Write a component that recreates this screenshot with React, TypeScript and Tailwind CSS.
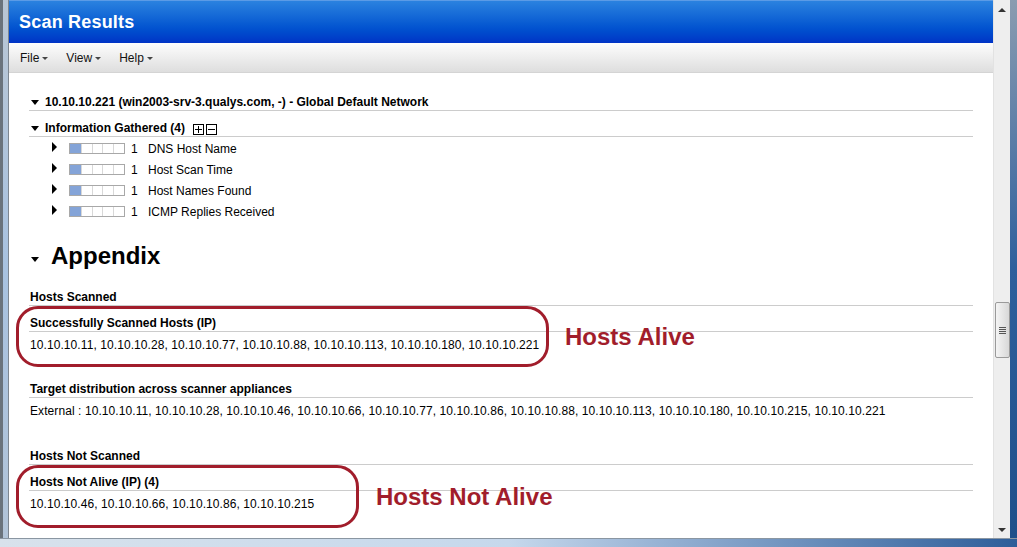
import React from 'react';

const font = { fontFamily: '"Liberation Sans", Arial, sans-serif' };

const infoRows = ['DNS Host Name', 'Host Scan Time', 'Host Names Found', 'ICMP Replies Received'];

const aliveHosts = '10.10.10.11, 10.10.10.28, 10.10.10.77, 10.10.10.88, 10.10.10.113, 10.10.10.180, 10.10.10.221';
const targetHosts =
  'External : 10.10.10.11, 10.10.10.28, 10.10.10.46, 10.10.10.66, 10.10.10.77, 10.10.10.86, 10.10.10.88, 10.10.10.113, 10.10.10.180, 10.10.10.215, 10.10.10.221';
const deadHosts = '10.10.10.46, 10.10.10.66, 10.10.10.86, 10.10.10.215';

const DownTri = ({ className = '' }: { className?: string }) => (
  <span className={`inline-block w-0 h-0 border-l-[4px] border-r-[4px] border-t-[5px] border-l-transparent border-r-transparent border-t-black ${className}`} />
);

const MenuItem = ({ label }: { label: string }) => (
  <div className="flex items-center gap-[3px] text-[12px] text-[#111]">
    {label}
    <span className="inline-block w-0 h-0 border-l-[3px] border-r-[3px] border-t-[3px] border-l-transparent border-r-transparent border-t-[#444]" />
  </div>
);

const SubHeading = ({ children, className = '' }: { children: React.ReactNode; className?: string }) => (
  <div className={`h-[17px] border-b border-[#cccccc] text-[12px] leading-[16px] font-bold text-black pl-[1px] ${className}`}>{children}</div>
);

const IpLine = ({ children }: { children: React.ReactNode }) => (
  <div className="mt-[5px] h-[16px] leading-[16px] pl-[1px] tracking-[0.08px] whitespace-nowrap">{children}</div>
);

const ScoreBar = () => (
  <div className="flex w-[56px] h-[11px] border border-[#a8a8a8] bg-white">
    <div className="w-[11px] h-full bg-[#84a4d8]" />
    {[0, 1, 2, 3].map((i) => (
      <div key={i} className="w-[11px] h-full border-l border-[#d8d8d8]" />
    ))}
  </div>
);

export default function App() {
  return (
    <div style={font} className="w-[1017px] h-[547px] flex flex-col overflow-hidden bg-[#dfe7f0]">
      <div className="flex flex-1 min-h-0">
        {/* left frame */}
        <div className="w-[9px] flex">
          <div className="w-[3px] bg-[#6a737c]" />
          <div className="w-[5px] bg-gradient-to-b from-[#b9c6d4] via-[#a8c2e0] to-[#b2c4d8]" />
          <div className="w-[1px] bg-[#7d8690]" />
        </div>

        {/* main window */}
        <div className="flex-1 flex flex-col min-w-0 bg-white">
          <div className="h-[43px] flex items-center px-[10px] pt-[1px] bg-gradient-to-b from-[#2b82df] to-[#0033c6] border-t border-[#5b9be6]">
            <span className="text-white font-bold text-[18px] tracking-[0.2px]">Scan Results</span>
          </div>
          <div className="h-[30px] flex items-center gap-[18px] pl-[11px] pt-[1px] bg-gradient-to-b from-[#fdfdfd] to-[#dedede] border-b border-[#d4d4d4]">
            <MenuItem label="File" />
            <MenuItem label="View" />
            <MenuItem label="Help" />
          </div>

          <div className="flex-1 px-[20px] text-[12px] text-black">
            {/* host header */}
            <div className="mt-[21px] h-[17px] border-b border-[#cccccc] flex items-center gap-[6px] text-[12px] font-bold">
              <DownTri className="ml-[2px]" />
              <span>10.10.10.221 (win2003-srv-3.qualys.com, -) - Global Default Network</span>
            </div>

            <div className="mt-[9px] h-[17px] border-b border-[#cccccc] flex items-center gap-[6px] text-[12px] font-bold">
              <DownTri className="ml-[2px]" />
              <span>Information Gathered (4)</span>
              <div className="flex ml-[2px] mt-[2px]">
                <span className="w-[11px] h-[11px] border border-black flex items-center justify-center relative">
                  <span className="absolute w-[7px] h-[1px] bg-black" />
                  <span className="absolute w-[1px] h-[7px] bg-black" />
                </span>
                <span className="w-[11px] h-[11px] border border-black ml-[2px] flex items-center justify-center">
                  <span className="w-[7px] h-[1px] bg-black" />
                </span>
              </div>
            </div>

            <div className="mt-[1px]">
              {infoRows.map((r) => (
                <div key={r} className="h-[21px] flex items-center">
                  <span className="ml-[23px] inline-block w-0 h-0 border-t-[5px] border-b-[5px] border-l-[5px] border-t-transparent border-b-transparent border-l-black -mt-[4px]" />
                  <div className="ml-[12px]">
                    <ScoreBar />
                  </div>
                  <span className="ml-[6px] w-[17px]">1</span>
                  <span>{r}</span>
                </div>
              ))}
            </div>

            {/* Appendix */}
            <div className="mt-[19px] h-[30px] flex items-center">
              <DownTri className="ml-[2px] mt-[6px]" />
              <span className="ml-[12px] text-[24px] font-bold leading-[30px]">Appendix</span>
            </div>

            <SubHeading className="mt-[18px]">Hosts Scanned</SubHeading>

            <div className="relative pt-[9px]">
              <SubHeading>Successfully Scanned Hosts (IP)</SubHeading>
              <IpLine>{aliveHosts}</IpLine>
              <div className="absolute left-[-13px] top-[0px] w-[533px] h-[61px] border-[3px] border-[#a11d2b] rounded-[22px]" />
              <div className="absolute left-[536px] top-[17px] text-[24px] font-bold text-[#a11d2b] leading-[28px] whitespace-nowrap">Hosts Alive</div>
            </div>

            <SubHeading className="mt-[28px]">Target distribution across scanner appliances</SubHeading>
            <IpLine>{targetHosts}</IpLine>

            <SubHeading className="mt-[29px]">Hosts Not Scanned</SubHeading>

            <div className="relative pt-[9px]">
              <SubHeading>Hosts Not Alive (IP) (4)</SubHeading>
              <IpLine>{deadHosts}</IpLine>
              <div className="absolute left-[-13px] top-[0px] w-[343px] h-[63px] border-[3px] border-[#a11d2b] rounded-[22px]" />
              <div className="absolute left-[347px] top-[18px] text-[24px] font-bold text-[#a11d2b] leading-[28px] whitespace-nowrap">Hosts Not Alive</div>
            </div>
          </div>
        </div>

        {/* scrollbar */}
        <div className="w-[17px] flex flex-col items-center bg-[#eeeeee] border-l border-[#e2e2e2]">
          <span className="mt-[8px] inline-block w-0 h-0 border-l-[4px] border-r-[4px] border-b-[4px] border-l-transparent border-r-transparent border-b-[#333]" />
          <div className="mt-[290px] w-[15px] h-[56px] rounded-[2px] border border-[#9a9a9a] bg-gradient-to-r from-[#f4f4f4] to-[#d8d8d8] flex flex-col items-center justify-center gap-[1px]">
            <span className="w-[7px] h-[1px] bg-[#555]" />
            <span className="w-[7px] h-[1px] bg-[#555]" />
            <span className="w-[7px] h-[1px] bg-[#555]" />
            <span className="w-[7px] h-[1px] bg-[#555]" />
          </div>
          <div className="flex-1" />
          <span className="mb-[6px] inline-block w-0 h-0 border-l-[4px] border-r-[4px] border-t-[4px] border-l-transparent border-r-transparent border-t-[#333]" />
        </div>

        {/* right frame */}
        <div className="w-[7px] bg-gradient-to-b from-[#8a9cb0] via-[#2e5f9c] to-[#1f4f8a]" />
      </div>

      {/* bottom frame */}
      <div className="h-[9px] border-t border-[#8a96a2] bg-gradient-to-r from-[#d8e2ec] via-[#c6d8ec] to-[#2d5d99]" />
    </div>
  );
}
